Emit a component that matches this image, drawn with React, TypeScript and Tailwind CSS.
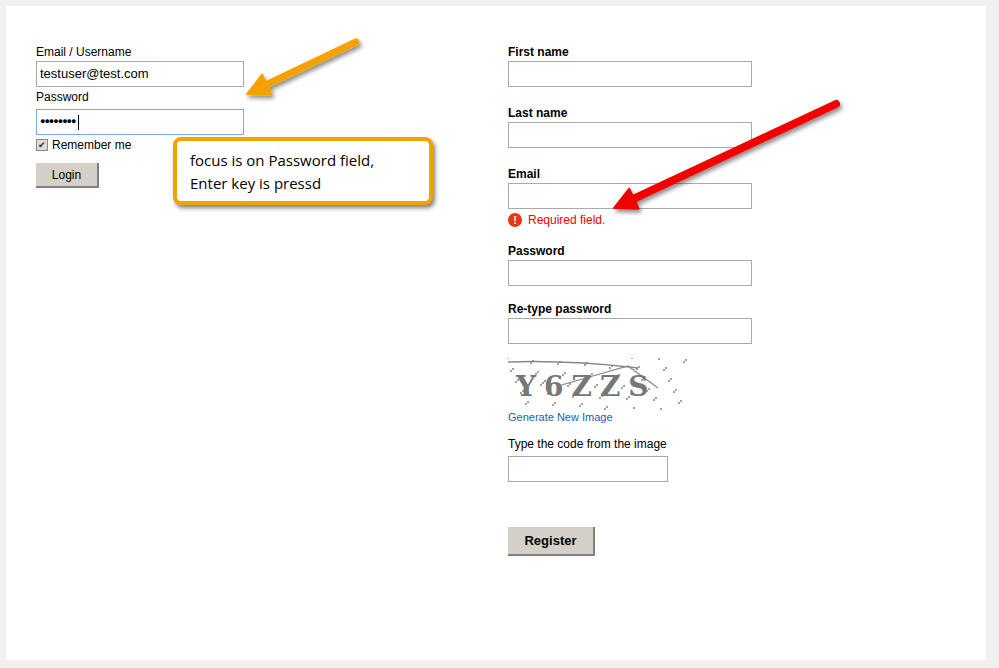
import React from "react";

const inp = "block border border-[#a9a9a9] bg-white h-[26px]";

function Arrow({ x1, y1, x2, y2, color, w }: { x1: number; y1: number; x2: number; y2: number; color: string; w: number }) {
  const ang = Math.atan2(y2 - y1, x2 - x1);
  const hl = 22, hw = 11;
  const bx = x2 - hl * Math.cos(ang), by = y2 - hl * Math.sin(ang);
  const px = -Math.sin(ang), py = Math.cos(ang);
  const pts = `${x2},${y2} ${bx + px * hw},${by + py * hw} ${bx - px * hw},${by - py * hw}`;
  return (
    <g filter="url(#sh)">
      <line x1={x1} y1={y1} x2={bx} y2={by} stroke={color} strokeWidth={w} strokeLinecap="round" />
      <polygon points={pts} fill={color} stroke={color} strokeWidth={2} strokeLinejoin="round" />
    </g>
  );
}

export default function App() {
  return (
    <div className="w-[999px] h-[668px] bg-[#f0f0f0] pt-[6px] pl-[6px] relative" style={{ fontFamily: "Arial, 'Liberation Sans', sans-serif" }}>
      <div className="w-[980px] h-[654px] bg-white flex text-[12px] text-black">
        <div className="w-[502px] pl-[30px] pt-[39px]">
          <div className="leading-[14px]">Email / Username</div>
          <div className={`${inp} w-[208px] mt-[2px] px-[3px] text-[13px] leading-[24px]`}>testuser@test.com</div>
          <div className="leading-[14px] mt-[3px]">Password</div>
          <div className="block border border-[#7ea6e8] bg-white h-[26px] w-[208px] mt-[5px] px-[3px] flex items-center">
            <span className="text-[9px] tracking-[-1px]">●●●●●●●●</span>
            <span className="w-px h-[15px] bg-black ml-[2px]" />
          </div>
          <div className="flex items-center gap-[4px] mt-[3px] h-[14px]">
            <span className="w-[12px] h-[12px] border border-[#888] bg-[#ddd] flex items-center justify-center text-[9px] text-[#333] leading-none">✔</span>
            <span>Remember me</span>
          </div>
          <div className="mt-[11px] w-[63px] h-[25px] bg-[#d4d0c8] border-r-2 border-b-2 border-[#808080] flex items-center justify-center">Login</div>
        </div>
        <div className="pt-[39px] font-bold">
          {["First name", "Last name", "Email"].map((l, i) => (
            <div key={l} className={i ? "mt-[19px]" : ""}>
              <div className="leading-[14px]">{l}</div>
              <div className={`${inp} w-[244px] mt-[2px]`} />
            </div>
          ))}
          <div className="flex items-center gap-[6px] mt-[3px] font-normal text-[#ff0000] h-[16px]">
            <span className="w-[14px] h-[14px] rounded-full bg-[#e8380d] text-white text-[11px] font-bold flex items-center justify-center">!</span>
            Required field.
          </div>
          {["Password", "Re-type password"].map((l) => (
            <div key={l} className="mt-[16px]">
              <div className="leading-[14px]">{l}</div>
              <div className={`${inp} w-[244px] mt-[2px]`} />
            </div>
          ))}
          <svg width="180" height="52" className="mt-[14px] block" viewBox="0 0 180 52">
            <path d="M0 4 Q60 2 130 10" stroke="#888" fill="none" strokeWidth="1.5" />
            <path d="M50 28 L120 8 L150 30" stroke="#888" fill="none" strokeWidth="1.2" />
            {Array.from({ length: 70 }).map((_, i) => (
              <circle key={i} cx={(i * 37) % 180} cy={(i * 23) % 52} r={0.9} fill="#777" />
            ))}
            <text x="8" y="38" fontFamily="'DejaVu Serif', serif" fontSize="28" fontWeight="bold" fill="#777" letterSpacing="8">Y6ZZS</text>
          </svg>
          <div className="font-normal text-[11px] text-[#1a5fb4] leading-[13px] mt-[1px]">Generate New Image</div>
          <div className="font-normal leading-[14px] mt-[13px]">Type the code from the image</div>
          <div className={`${inp} w-[160px] mt-[5px] h-[24px]`} />
          <div className="mt-[45px] w-[87px] h-[29px] bg-[#d4d0c8] border-r-2 border-b-2 border-[#808080] flex items-center justify-center text-[13px]">Register</div>
        </div>
      </div>
      <div className="absolute left-[173px] top-[137px] w-[260px] h-[68px] bg-white border-[4px] border-[#f5a200] rounded-[8px] shadow-[2px_3px_4px_rgba(0,0,0,0.5)] px-[13px] pt-[8px] text-[15px] leading-[23px] text-black" style={{ fontFamily: "'Open Sans', sans-serif" }}>
        focus is on Password field,<br />Enter key is pressd
      </div>
      <svg className="absolute left-0 top-0 pointer-events-none" width="999" height="668">
        <defs>
          <filter id="sh" x="-20%" y="-20%" width="140%" height="140%">
            <feDropShadow dx="2" dy="3" stdDeviation="2" floodColor="#000" floodOpacity="0.45" />
          </filter>
        </defs>
        <Arrow x1={356} y1={42} x2={247} y2={94} color="#f5a200" w={7} />
        <Arrow x1={836} y1={104} x2={614} y2={208} color="#f20000" w={8} />
      </svg>
    </div>
  );
}
